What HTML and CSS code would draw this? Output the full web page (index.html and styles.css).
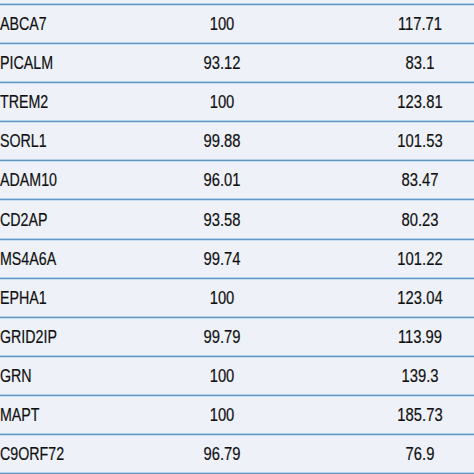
FILE: index.html
```html
<!DOCTYPE html>
<html>
<head>
<meta charset="utf-8">
<link rel="stylesheet" href="styles.css">
</head>
<body>
<div class="table">
  <div class="row"><span class="gene">ABCA7</span><span class="num">100</span><span class="num last">117.71</span></div>
  <div class="row"><span class="gene">PICALM</span><span class="num">93.12</span><span class="num last">83.1</span></div>
  <div class="row"><span class="gene">TREM2</span><span class="num">100</span><span class="num last">123.81</span></div>
  <div class="row"><span class="gene">SORL1</span><span class="num">99.88</span><span class="num last">101.53</span></div>
  <div class="row"><span class="gene">ADAM10</span><span class="num">96.01</span><span class="num last">83.47</span></div>
  <div class="row"><span class="gene">CD2AP</span><span class="num">93.58</span><span class="num last">80.23</span></div>
  <div class="row"><span class="gene">MS4A6A</span><span class="num">99.74</span><span class="num last">101.22</span></div>
  <div class="row"><span class="gene">EPHA1</span><span class="num">100</span><span class="num last">123.04</span></div>
  <div class="row"><span class="gene">GRID2IP</span><span class="num">99.79</span><span class="num last">113.99</span></div>
  <div class="row"><span class="gene">GRN</span><span class="num">100</span><span class="num last">139.3</span></div>
  <div class="row"><span class="gene">MAPT</span><span class="num">100</span><span class="num last">185.73</span></div>
  <div class="row"><span class="gene">C9ORF72</span><span class="num">96.79</span><span class="num last">76.9</span></div>
  <div class="end"></div>
</div>
</body>
</html>
```
FILE: styles.css
```css
html, body {
  margin: 0;
  padding: 0;
  background: #eef1f8;
  overflow: hidden;
}
body {
  width: 474px;
  height: 474px;
}
.table {
  padding-top: 3px;
  font-family: "Liberation Sans", Arial, sans-serif;
  font-size: 18.5px;
  color: #101010;
  -webkit-text-stroke: 0.2px #101010;
}
.row {
  display: grid;
  grid-template-columns: 122px 200px 152px;
  align-items: center;
  height: 39.1px;
  box-sizing: border-box;
  padding-top: 3px;
  background: linear-gradient(#b3d2ea 0 1px, #6496c4 1px 2px, #c6def1 2px 3px, #eef1f8 3px);
}
.gene {
  display: block;
  text-align: left;
  transform: scaleX(0.77);
  transform-origin: 0 50%;
  white-space: nowrap;
}
.num {
  display: block;
  text-align: center;
  transform: scaleX(0.8);
  transform-origin: 50% 50%;
  white-space: nowrap;
}
.last {
  padding-left: 44px;
  transform-origin: 98px 50%;
}
.end {
  height: 3px;
  background: linear-gradient(#b3d2ea 0 1px, #6496c4 1px 2px, #c6def1 2px 3px);
}
```
